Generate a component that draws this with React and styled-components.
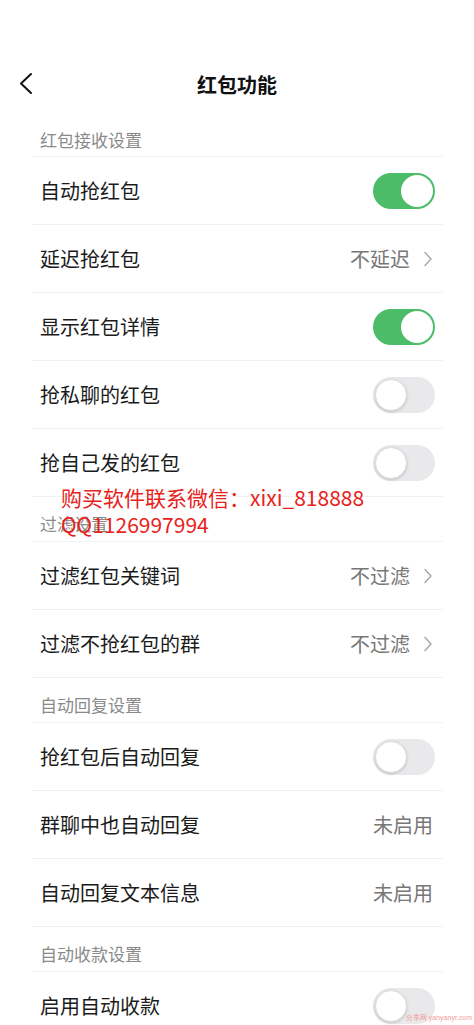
import React from 'react'
import styled, { createGlobalStyle } from 'styled-components'

const GlobalStyle = createGlobalStyle`
  html, body {
    margin: 0;
    padding: 0;
    background: #fff;
    font-family: "Noto Sans CJK SC", "Noto Sans", sans-serif;
  }
`

const Page = styled.div`
  position: relative;
  width: 474px;
  height: 1025px;
  overflow: hidden;
  background: #fff;
`

const Header = styled.div`
  position: relative;
  height: 48px;
  margin-top: 60px;
  display: flex;
  align-items: center;
  justify-content: center;
`

const BackButton = styled.div`
  position: absolute;
  left: 18px;
  top: 12px;
  display: flex;
`

const Title = styled.h1`
  margin: 0;
  font-size: 20px;
  font-weight: 700;
  color: #111;
`

const List = styled.div`
  margin: 0 31px 0 32px;
`

const SectionHeader = styled.div`
  height: ${p => p.$first ? 49 : 45}px;
  display: flex;
  align-items: flex-end;
  padding: 0 8px ${p => p.$first ? 4 : 5}px;
  font-size: 17px;
  line-height: 24px;
  color: #8a8a8a;
  border-bottom: 1px solid #f2f2f2;
  box-sizing: border-box;
`

const Row = styled.div`
  height: 68px;
  display: flex;
  align-items: center;
  justify-content: space-between;
  padding: 0 8px;
  border-bottom: 1px solid #f0f0f0;
  box-sizing: border-box;
`

const Label = styled.span`
  font-size: 20px;
  color: #1b1b1b;
`

const Value = styled.span`
  display: flex;
  align-items: center;
  gap: 14px;
  font-size: 20px;
  color: #777;
  margin-right: ${p => p.$chevron ? 3 : 2}px;
`

const Track = styled.div`
  position: relative;
  width: 62px;
  height: 36px;
  border-radius: 18px;
  background: ${p => p.$on ? '#4cbc68' : '#e9e9eb'};
`

const Knob = styled.div`
  position: absolute;
  top: 2px;
  left: ${p => p.$on ? 28 : 2}px;
  width: 32px;
  height: 32px;
  border-radius: 50%;
  background: #fff;
  box-shadow: ${p => p.$on ? 'none' : '0 1px 3px rgba(0,0,0,0.18)'};
  border: ${p => p.$on ? '0' : '1px solid #ddd'};
  box-sizing: border-box;
`

const Watermark = styled.div`
  position: absolute;
  left: 61px;
  top: 484px;
  font-size: 21px;
  line-height: 27px;
  color: #e8221b;
  pointer-events: none;
`

const CornerMark = styled.div`
  position: absolute;
  right: 2px;
  bottom: 2px;
  font-size: 7px;
  color: #f29a9a;
  font-family: "Liberation Sans", sans-serif;
`

function Toggle({ on }) {
  return (
    <Track $on={on}>
      <Knob $on={on} />
    </Track>
  )
}

function Chevron() {
  return (
    <svg width="8" height="16" viewBox="0 0 8 16">
      <path d="M1 1.5L7 8L1 14.5" fill="none" stroke="#a6a6a6" strokeWidth="1.4" strokeLinecap="round" strokeLinejoin="round" />
    </svg>
  )
}

const sections = [
  {
    title: '红包接收设置',
    rows: [
      { label: '自动抢红包', toggle: true },
      { label: '延迟抢红包', value: '不延迟', chevron: true },
      { label: '显示红包详情', toggle: true },
      { label: '抢私聊的红包', toggle: false },
      { label: '抢自己发的红包', toggle: false },
    ],
  },
  {
    title: '过滤设置',
    rows: [
      { label: '过滤红包关键词', value: '不过滤', chevron: true },
      { label: '过滤不抢红包的群', value: '不过滤', chevron: true },
    ],
  },
  {
    title: '自动回复设置',
    rows: [
      { label: '抢红包后自动回复', toggle: false },
      { label: '群聊中也自动回复', value: '未启用' },
      { label: '自动回复文本信息', value: '未启用' },
    ],
  },
  {
    title: '自动收款设置',
    rows: [
      { label: '启用自动收款', toggle: false },
    ],
  },
]

export default function App() {
  return (
    <>
      <GlobalStyle />
      <Page>
        <Header>
          <BackButton>
            <svg width="16" height="24" viewBox="0 0 16 24">
              <path d="M13 2L3 11.5L13 21" fill="none" stroke="#111" strokeWidth="2" strokeLinecap="round" strokeLinejoin="round" />
            </svg>
          </BackButton>
          <Title>红包功能</Title>
        </Header>
        <List>
          {sections.map((s, i) => (
            <div key={s.title}>
              <SectionHeader $first={i === 0}>{s.title}</SectionHeader>
              {s.rows.map(r => (
                <Row key={r.label}>
                  <Label>{r.label}</Label>
                  {r.value !== undefined ? (
                    <Value $chevron={r.chevron}>
                      {r.value}
                      {r.chevron && <Chevron />}
                    </Value>
                  ) : (
                    <Toggle on={r.toggle} />
                  )}
                </Row>
              ))}
            </div>
          ))}
        </List>
        <Watermark>
          购买软件联系微信：xixi_818888<br />QQ1126997994
        </Watermark>
        <CornerMark>分享网 yanyanyr.com</CornerMark>
      </Page>
    </>
  )
}
